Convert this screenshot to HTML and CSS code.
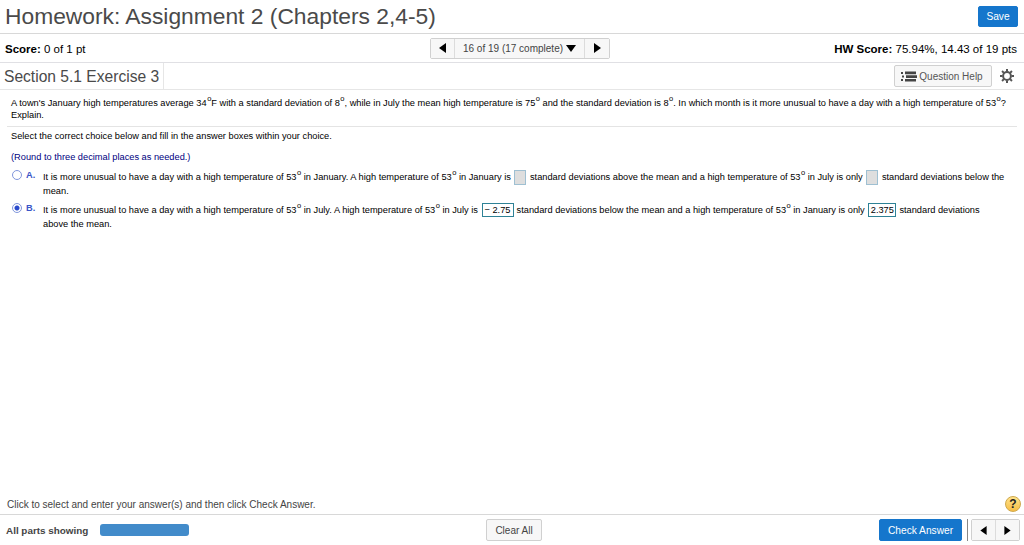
FILE: index.html
```html
<!DOCTYPE html>
<html lang="en">
<head>
  <meta charset="UTF-8">
  <meta name="viewport" content="width=device-width, initial-scale=1.0">
  <title>Homework: Assignment 2</title>
  <link rel="stylesheet" href="styles.css">
</head>
<body>
  <header class="title-bar">
    <h1>Homework: Assignment 2 (Chapters 2,4-5)</h1>
    <button class="btn-blue save">Save</button>
  </header>

  <div class="score-bar">
    <div class="score"><b>Score:</b> 0 of 1 pt</div>
    <div class="pager">
      <button class="prev"><svg width="7" height="10" viewBox="0 0 7 10"><path d="M7 0v10L0 5z"/></svg></button>
      <button class="current"><span>16 of 19 (17 complete)</span><svg width="10" height="7" viewBox="0 0 10 7"><path d="M0 0h10L5 7z"/></svg></button>
      <button class="next"><svg width="7" height="10" viewBox="0 0 7 10"><path d="M0 0v10l7-5z"/></svg></button>
    </div>
    <div class="hw-score"><b>HW Score:</b> 75.94%, 14.43 of 19 pts</div>
  </div>

  <div class="section-bar">
    <h2>Section 5.1 Exercise 3</h2>
    <button class="help">
      <svg width="16" height="11" viewBox="0 0 16 11"><path d="M0 1h2v2H0zM1 4.500h2v2H1zM0 8h2v2H0zM4 .5h11v2.700H4zM5 4.200h11v2.700H5zM4 7.900h11v2.700H4z"/></svg>
      <span>Question Help</span>
    </button>
    <svg class="gear" width="14" height="14" viewBox="0 0 14 14">
      <circle cx="7" cy="7" r="3.900"/>
      <path d="M7 0v2.500M7 11.500V14M0 7h2.500M11.500 7H14M2.050 2.050l1.800 1.800M10.150 10.150l1.800 1.800M11.950 2.050l-1.800 1.800M3.850 10.150l-1.800 1.800"/>
    </svg>
  </div>

  <main>
    <div class="question">
      <p class="q-line">A town's January high temperatures average 34<sup>o</sup>F with a standard deviation of 8<sup>o</sup>, while in July the mean high temperature is 75<sup>o</sup> and the standard deviation is 8<sup>o</sup>. In which month is it more unusual to have a day with a high temperature of 53<sup>o</sup>?</p>
      <p>Explain.</p>
    </div>
    <p class="instruction">Select the correct choice below and fill in the answer boxes within your choice.</p>
    <p class="rounding">(Round to three decimal places as needed.)</p>

    <div class="choice">
      <span class="radio"></span>
      <b>A.</b>
      <div class="choice-text">
        <p>It is more unusual to have a day with a high temperature of 53<sup>o</sup> in January. A high temperature of 53<sup>o</sup> in January is <span class="blank"></span> standard deviations above the mean and a high temperature of 53<sup>o</sup> in July is only <span class="blank"></span> standard deviations below the</p>
        <p>mean.</p>
      </div>
    </div>
    <div class="choice">
      <span class="radio checked"></span>
      <b>B.</b>
      <div class="choice-text">
        <p>It is more unusual to have a day with a high temperature of 53<sup>o</sup> in July. A high temperature of 53<sup>o</sup> in July is <span class="answer wide">− 2.75</span> standard deviations below the mean and a high temperature of 53<sup>o</sup> in January is only <span class="answer">2.375</span> standard deviations</p>
        <p>above the mean.</p>
      </div>
    </div>
  </main>

  <div class="hint-bar">
    <span>Click to select and enter your answer(s) and then click Check Answer.</span>
    <span class="help-badge">?</span>
  </div>

  <footer>
    <b class="parts">All parts showing</b>
    <div class="progress"></div>
    <button class="clear">Clear All</button>
    <button class="btn-blue check">Check Answer</button>
    <div class="divider"></div>
    <div class="pager small">
      <button><svg width="7" height="9" viewBox="0 0 7 10"><path d="M7 0v10L0 5z"/></svg></button>
      <button><svg width="7" height="9" viewBox="0 0 7 10"><path d="M0 0v10l7-5z"/></svg></button>
    </div>
  </footer>
</body>
</html>
```
FILE: styles.css
```css
* {
  box-sizing: border-box;
}

body {
  margin: 0;
  height: 545px;
  display: flex;
  flex-direction: column;
  overflow: hidden;
  background: #fff;
  color: #000;
  font-family: "Liberation Sans", Arial, sans-serif;
}

h1, h2, p {
  margin: 0;
  font-weight: normal;
  white-space: nowrap;
}

button {
  font-family: inherit;
  border: 1px solid #d0d0d0;
  border-radius: 2px;
  background: #f7f7f7;
  color: #444;
  padding: 0;
  display: flex;
  align-items: center;
  justify-content: center;
  white-space: nowrap;
}

.btn-blue {
  background: #1576cc;
  border-color: #1576cc;
  color: #fff;
}

.title-bar {
  height: 34px;
  border-bottom: 1px solid #d8d8d8;
  display: flex;
  justify-content: space-between;
  align-items: center;
  padding: 0 6px 1px 5px;
}

h1 {
  font-size: 22.800px;
  color: #4a4a4a;
}

.save {
  width: 40px;
  height: 21px;
  font-size: 10.200px;
}

.score-bar {
  height: 29px;
  border-bottom: 1px solid #e0e0e4;
  display: grid;
  grid-template-columns: 430px 180px 1fr;
  align-items: center;
  font-size: 11.500px;
}

.score {
  padding: 1px 0 0 5px;
}

.hw-score {
  text-align: right;
  padding: 1px 7px 0 0;
}

.pager {
  display: flex;
  height: 21px;
  border: 1px solid #d0d0d0;
  border-radius: 2px;
  background: #f7f7f7;
}

.pager button {
  border: 0;
  border-right: 1px solid #dcdcdc;
  border-radius: 0;
  width: 24px;
  font-size: 10px;
}

.pager button:last-child {
  border-right: 0;
}

.pager svg {
  fill: #000;
}

.pager .current {
  flex: 1;
  gap: 3px;
}

.section-bar {
  height: 27px;
  border-bottom: 1px solid #e6e6e6;
  display: flex;
  align-items: center;
  padding-right: 10px;
}

h2 {
  width: 164px;
  height: 26px;
  line-height: 27px;
  padding-left: 4px;
  border-right: 1px solid #e6e6e6;
  font-size: 15.600px;
  color: #4a4a4a;
}

.help {
  margin-left: auto;
  width: 98px;
  height: 22px;
  gap: 2px;
  padding-right: 2px;
  font-size: 10px;
  color: #555;
}

.help svg {
  fill: #444;
}

.gear {
  margin-left: 8px;
  fill: none;
  stroke: #555;
  stroke-width: 2;
}

main {
  flex: 1;
  padding: 7px 7px 0;
  font-size: 9.250px;
}

sup {
  font-size: 7.500px;
  line-height: 0;
  vertical-align: 5px;
  margin-left: .5px;
}

.question {
  height: 30px;
  padding-left: 4px;
  line-height: 12px;
  border-bottom: 1px solid #e4e4e4;
}

.instruction {
  padding: 3px 0 0 4px;
  line-height: 13px;
}

.rounding {
  padding: 8px 0 0 4px;
  line-height: 13px;
  color: #000080;
}

.choice {
  display: flex;
  align-items: flex-start;
  height: 33px;
  padding: 6px 0 0 5px;
}

.choice b {
  flex: none;
  width: 16px;
  margin-left: 4px;
  margin-right: 1px;
  color: #3a55c8;
  line-height: 11px;
}

.choice-text {
  line-height: 14px;
}

.choice-text p:first-child {
  height: 14px;
  line-height: 15px;
}

.radio {
  flex: none;
  width: 10px;
  height: 10px;
  border: 1px solid #8197dc;
  border-radius: 50%;
  background: #fff;
}

.radio.checked {
  background: radial-gradient(circle, #2949cc 0 2px, #fff 3px);
}

.blank {
  display: inline-block;
  width: 12px;
  height: 15px;
  margin: -3px 1px;
  border: 1px solid #9fc0d2;
  background: #dedede;
  vertical-align: middle;
}

.answer {
  display: inline-block;
  width: 28px;
  height: 14px;
  line-height: 12px;
  margin: -4px .5px -2px 1px;
  border: 1px solid #2e8296;
  text-align: center;
  vertical-align: middle;
}

.answer.wide {
  width: 32px;
}

.hint-bar {
  height: 21px;
  display: flex;
  align-items: center;
  justify-content: space-between;
  padding: 1px 3px 0 7px;
  font-size: 10px;
  color: #444;
}

.help-badge {
  width: 16px;
  height: 16px;
  line-height: 14px;
  text-align: center;
  border: 1px solid #cfa84b;
  border-radius: 50%;
  background: linear-gradient(#ffe48c, #f7bd45);
  color: #222;
  font-weight: bold;
  font-size: 12px;
}

footer {
  height: 31px;
  border-top: 1px solid #d8d8d8;
  display: flex;
  align-items: center;
  padding: 0 4px 0 6px;
}

.parts {
  width: 94px;
  font-size: 9.900px;
  color: #444;
  white-space: nowrap;
}

.progress {
  width: 89px;
  height: 12px;
  border-radius: 3px;
  background: #428bca;
}

.clear {
  margin-left: 297px;
  width: 56px;
  height: 22px;
  font-size: 10px;
}

.check {
  margin-left: auto;
  width: 83px;
  height: 22px;
  font-size: 10.200px;
}

.divider {
  width: 1px;
  height: 22px;
  margin: 0 3px 0 5px;
  background: #888;
}

.pager.small {
  width: 49px;
  height: 22px;
}
```
